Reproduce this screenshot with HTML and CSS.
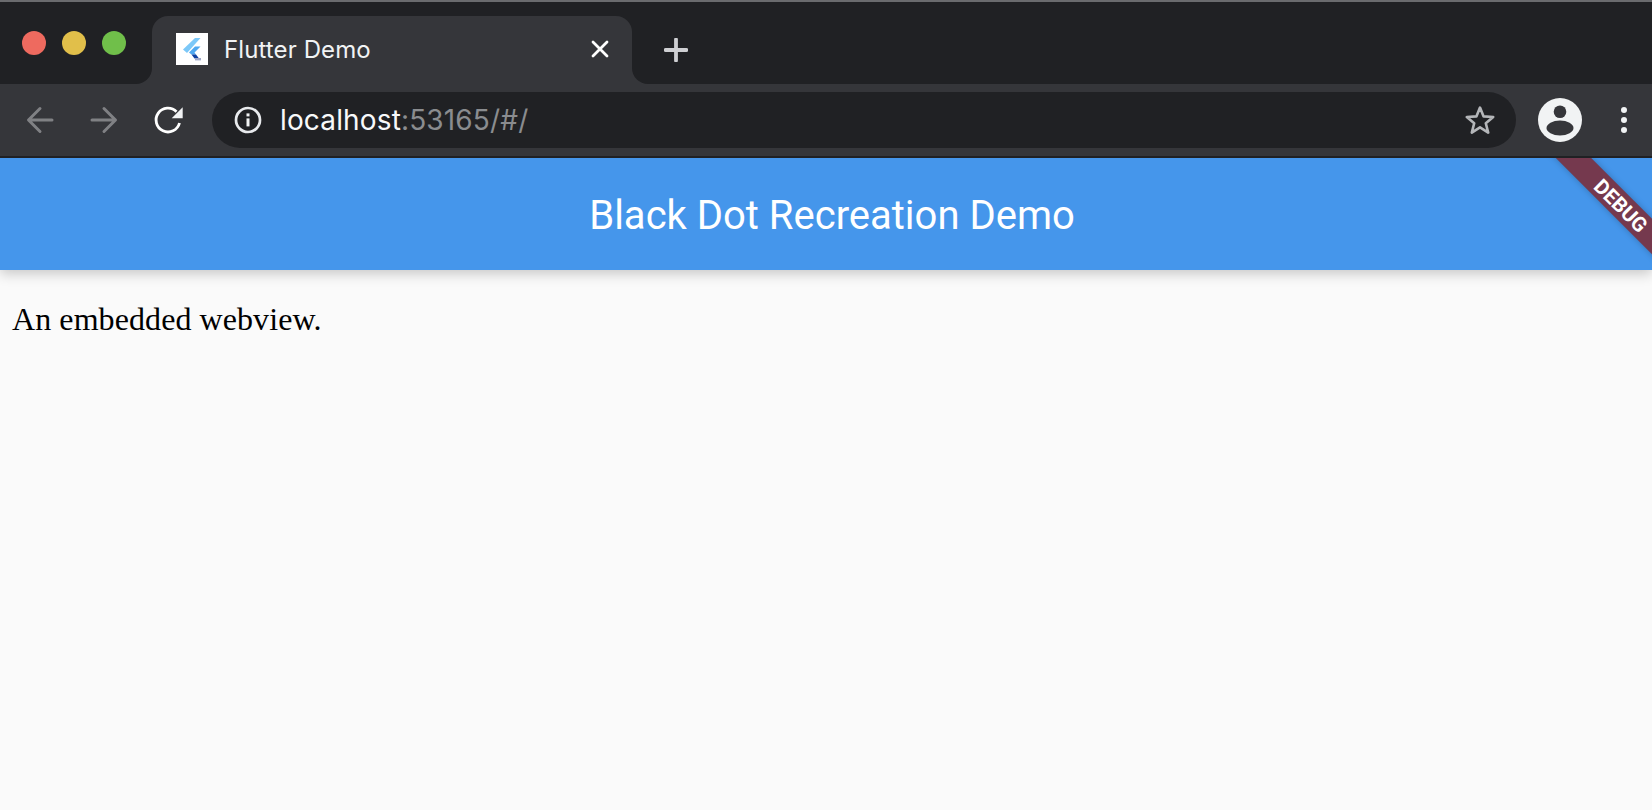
FILE: index.html
```html
<!DOCTYPE html>
<html lang="en">
<head>
<meta charset="utf-8">
<title>Flutter Demo</title>
<link rel="stylesheet" href="styles.css">
</head>
<body>
<div class="window">
  <div class="topline"></div>
  <div class="tabstrip">
    <div class="lights">
      <span class="light red"></span>
      <span class="light yellow"></span>
      <span class="light green"></span>
    </div>
    <div class="tab">
      <svg class="favicon" viewBox="0 0 32 32" width="32" height="32">
        <rect width="32" height="32" fill="#fff"/>
        <g class="favicon-mark">
          <path d="M7 16.5 L19 5 H24.5 L11 20 Z" fill="#7cc8f8"/>
          <path d="M13 19.5 L19 13.5 H24.5 L18.5 19.5 L20 21.5 H15.5 Z" fill="#4fa8f0"/>
          <path d="M15.5 21.5 H20 L23 25.5 H18.5 Z" fill="#0d3fa1"/>
          <rect x="19" y="25" width="6" height="2.4" fill="#9fa8c9"/>
        </g>
      </svg>
      <span class="tab-title">Flutter Demo</span>
      <svg class="tab-close" viewBox="0 0 18 18" width="18" height="18">
        <path d="M2 2 L16 16 M16 2 L2 16" stroke="#fff" stroke-width="2.8" stroke-linecap="round"/>
      </svg>
    </div>
    <div class="strip-rest">
      <svg class="new-tab" viewBox="0 0 24 24" width="24" height="24">
        <path d="M12 1.5 V22.5 M1.5 12 H22.5" stroke="#cfd0d3" stroke-width="3.8" stroke-linecap="round"/>
      </svg>
    </div>
  </div>
  <div class="toolbar">
    <button class="tool">
      <svg viewBox="0 0 28 28" width="28" height="28"><path d="M26 14 H3 M14 2.5 L2.5 14 L14 25.5" fill="none" stroke="#808184" stroke-width="3" stroke-linecap="round" stroke-linejoin="round"/></svg>
    </button>
    <button class="tool">
      <svg viewBox="0 0 28 28" width="28" height="28"><path d="M2 14 H25 M14 2.5 L25.5 14 L14 25.5" fill="none" stroke="#808184" stroke-width="3" stroke-linecap="round" stroke-linejoin="round"/></svg>
    </button>
    <button class="tool">
      <svg viewBox="0 0 30 30" width="30" height="30"><path d="M26.5 18 A11.9 11.9 0 1 1 23.5 6.7" fill="none" stroke="#fff" stroke-width="2.8"/><path d="M29.7 2.3 V13.3 H18.7 Z" fill="#f1f3f4"/></svg>
    </button>
    <div class="omnibox">
      <svg class="info" viewBox="0 0 28 28" width="28" height="28">
        <circle cx="14" cy="14" r="12" fill="none" stroke="#e8eaed" stroke-width="2.7"/>
        <rect x="12.5" y="12.4" width="3" height="8" fill="#f1f3f4"/>
        <rect x="12.5" y="7.4" width="3" height="3" fill="#f1f3f4"/>
      </svg>
      <span class="url"><span class="host">localhost</span><span class="rest">:53165/#/</span></span>
      <svg class="star" viewBox="0 0 30 30" width="30" height="30">
        <path d="M15 2.6 L18.6 11.4 L28.2 12 L20.8 18.2 L23.2 27.6 L15 22.4 L6.8 27.6 L9.2 18.2 L1.8 12 L11.4 11.4 Z" fill="none" stroke="#b4b6b9" stroke-width="2.6" stroke-linejoin="round"/>
      </svg>
    </div>
    <div class="avatar">
      <svg viewBox="0 0 44 44" width="44" height="44">
        <circle cx="22" cy="22" r="22" fill="#f1f3f4"/>
        <circle cx="22" cy="13.8" r="6.3" fill="#35363a"/>
        <ellipse cx="22" cy="30" rx="13.5" ry="7.4" fill="#35363a"/>
      </svg>
    </div>
    <div class="kebab">
      <span class="dot"></span><span class="dot"></span><span class="dot"></span>
    </div>
  </div>
  <div class="toolbar-edge"></div>
  <div class="app">
    <header class="appbar"><h1 class="appbar-title">Black Dot Recreation Demo</h1></header>
    <main class="webview">An embedded webview.</main>
    <div class="banner"><span class="banner-text">DEBUG</span></div>
  </div>
</div>
</body>
</html>
```

FILE: styles.css
```css
* { box-sizing: border-box; }
html, body { margin: 0; height: 100%; overflow: hidden; }
.window { height: 810px; display: flex; flex-direction: column; background: #fafafa; }
.topline { height: 2px; background: #6a6b6e; flex: none; }

.tabstrip {
  height: 82px; flex: none; display: flex; background: #35363a;
  background-image: linear-gradient(#202124, #202124);
  background-size: 100% 30px; background-repeat: no-repeat;
}
.lights {
  width: 152px; background: #202124; border-bottom-right-radius: 16px;
  display: flex; gap: 16px; padding: 29px 0 0 22px;
}
.light { width: 24px; height: 24px; border-radius: 50%; }
.red { background: #ee6a5f; }
.yellow { background: #e1bf4a; }
.green { background: #70bf4a; }

.tab {
  width: 480px; margin-top: 14px; border-radius: 16px 16px 0 0; background: #35363a;
  display: flex; align-items: center; padding: 0 23px 2px 24px;
}
.favicon { flex: none; }
.favicon-mark { filter: blur(0.6px); }
.tab-title {
  margin-left: 16px; flex: 1;
  font: 400 24px "Inter", "Liberation Sans", sans-serif; letter-spacing: 0.1px; color: #f1f3f4;
}
.tab-close { flex: none; }
.strip-rest {
  flex: 1; background: #202124; border-bottom-left-radius: 16px;
  padding: 36px 0 0 32px;
}
.new-tab { display: block; }

.toolbar {
  height: 72px; flex: none; background: #35363a;
  display: flex; align-items: center; padding: 0 4px 0 8px;
}
.tool {
  width: 64px; height: 56px; flex: none; border: 0; padding: 0; background: none;
  display: flex; align-items: center; justify-content: center;
}
.omnibox {
  flex: 1; height: 56px; margin-left: 12px; border-radius: 28px; background: #202124;
  display: flex; align-items: center; padding: 0 21px 0 22px;
}
.info { flex: none; }
.url {
  flex: 1; margin-left: 18px;
  font: 400 28px "Inter", "Liberation Sans", sans-serif; letter-spacing: 0.15px;
}
.host { color: #f8f9fa; }
.rest { color: #8a8c8f; }
.star { flex: none; }
.avatar { width: 64px; margin-left: 12px; flex: none; display: flex; justify-content: center; }
.avatar svg { display: block; }
.kebab {
  width: 48px; margin-left: 8px; flex: none;
  display: flex; flex-direction: column; align-items: center; gap: 4px;
}
.dot { width: 6px; height: 6px; border-radius: 50%; background: #f1f3f4; }
.toolbar-edge { height: 2px; flex: none; background: #202124; }

.app { flex: 1; position: relative; overflow: hidden; display: flex; flex-direction: column; }
.appbar {
  height: 112px; flex: none; background: #4596eb;
  box-shadow: 0 4px 12px rgba(0, 0, 0, 0.2);
  display: flex; align-items: center; justify-content: center; padding: 2px 0 0 12px;
}
.appbar-title { margin: 0; font: 400 40px "Roboto", sans-serif; color: #fff; }
.webview {
  padding: 29px 12px 0;
  font: 400 32px/40px "Liberation Serif", serif; letter-spacing: 0.08px; color: #000;
}
.banner {
  position: absolute; top: 34px; right: -68px; width: 200px; height: 25px;
  transform: rotate(45deg); background: #75394e;
  box-shadow: 0 0 6px rgba(0, 0, 0, 0.25);
  display: flex; align-items: center; justify-content: center; padding-left: 3px;
}
.banner-text { font: 700 20.5px "Roboto", sans-serif; color: #fff; }
```
